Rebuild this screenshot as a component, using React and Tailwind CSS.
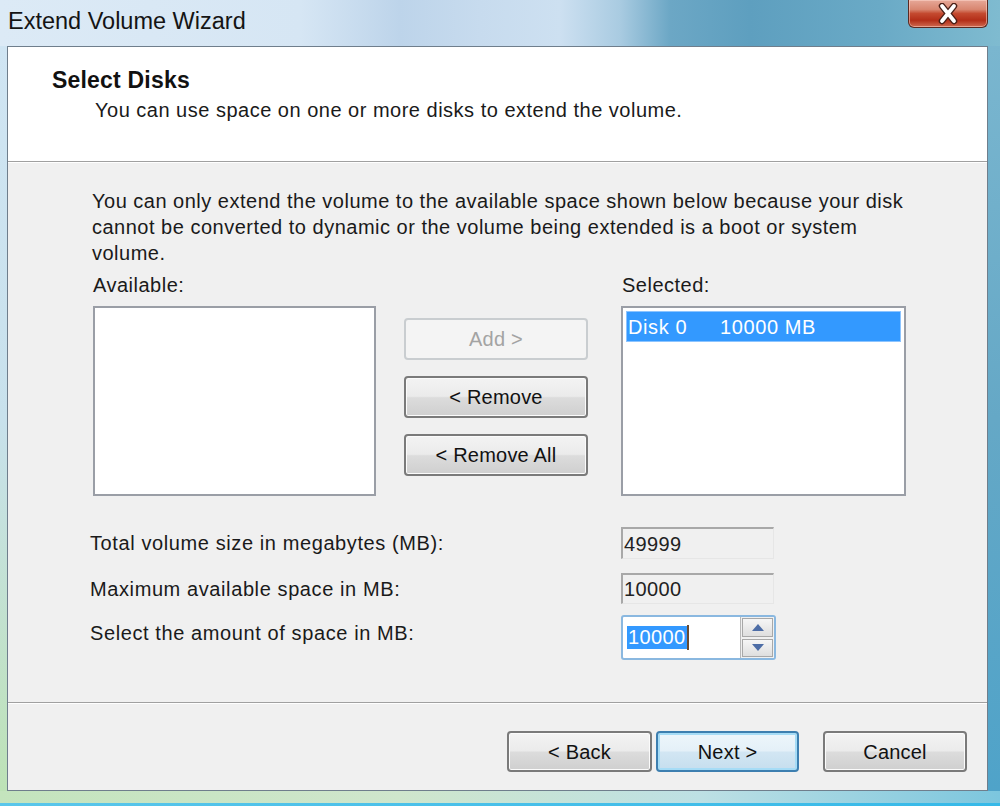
import React from "react";

function VButton({ children, className = "", disabled = false, focused = false }) {
  if (disabled) {
    return (
      <div className={"flex items-center justify-center rounded-[4px] border-2 border-[#c9cdd0] bg-[#f4f4f4] text-[#a3a3a3] text-[20px] leading-none tracking-[0.2px] " + className}>
        {children}
      </div>
    );
  }
  if (focused) {
    return (
      <div className={"flex items-center justify-center rounded-[4px] border-2 border-[#3d7fb0] bg-[linear-gradient(180deg,#eef6fb_0%,#e4f0f8_48%,#d2e6f3_52%,#c6deee_100%)] shadow-[inset_0_0_0_2px_#a6dcf6] text-[#111] text-[20px] leading-none tracking-[0.2px] " + className}>
        {children}
      </div>
    );
  }
  return (
    <div className={"flex items-center justify-center rounded-[4px] border-2 border-[#7a7a7a] bg-[linear-gradient(180deg,#f3f3f3_0%,#ebebeb_48%,#dcdcdc_52%,#cfcfcf_100%)] shadow-[inset_0_0_0_1px_#fbfbfb] text-[#111] text-[20px] leading-none tracking-[0.2px] " + className}>
      {children}
    </div>
  );
}

export default function App() {
  return (
    <div className="w-[1000px] h-[806px] flex flex-col overflow-hidden font-['Liberation_Sans',Arial,sans-serif] text-[#1a1a1a] bg-[#a9d0e3]">
      {/* Title bar */}
      <div className="h-[46px] flex items-start bg-[linear-gradient(90deg,#dceaf6_0%,#d6e6f4_30%,#bdd4ea_40%,#c7dbee_48%,#cde0f1_56%,#a9cbe1_62%,#6ca7c5_67%,#5e9fbf_75%,#6aaac6_88%,#7fbbd0_100%)]">
        <div className="pl-[8px] pt-[7px] text-[23.5px] leading-[28px] tracking-[0px] text-[#141414]">Extend Volume Wizard</div>
        <div className="ml-auto mr-[12px] w-[80px] h-[28px] rounded-b-[6px] border border-t-0 border-[#5a2a22] bg-[linear-gradient(180deg,#e6a898_0%,#d88670_35%,#c44a30_50%,#b32e18_75%,#cf6a50_100%)] shadow-[inset_0_0_0_1px_rgba(255,220,210,0.5)] flex items-center justify-center">
          <svg width="24" height="22" viewBox="0 0 24 22">
            <path d="M6 3 L18 18 M18 3 L6 18" stroke="#4a2018" strokeWidth="6.5" strokeLinecap="round" />
            <path d="M6 3 L18 18 M18 3 L6 18" stroke="#ffffff" strokeWidth="3.8" strokeLinecap="round" />
          </svg>
        </div>
      </div>

      {/* Middle */}
      <div className="flex flex-1 min-h-0">
        <div className="w-[7px] bg-[linear-gradient(180deg,#d0e5f3_0%,#c8e1ec_50%,#bde2b6_100%)]"></div>
        <div className="flex-1 border border-[#6f7e8c] flex flex-col min-w-0">
          {/* Header */}
          <div className="h-[114px] bg-white">
            <div className="pl-[44px] pt-[19px] text-[23px] leading-[28px] font-bold tracking-[0.2px] text-[#111]">Select Disks</div>
            <div className="pl-[87px] pt-[3px] text-[20px] leading-[26px] tracking-[0.5px]">You can use space on one or more disks to extend the volume.</div>
          </div>
          <div className="h-px bg-[#a0a0a0]"></div>
          <div className="h-px bg-white"></div>

          {/* Body */}
          <div className="flex-1 bg-[#f0f0f0] pl-[84px] pt-[25px] flex flex-col">
            <div className="text-[20px] leading-[26px] tracking-[0.5px] whitespace-nowrap">
              You can only extend the volume to the available space shown below because your disk
              <br />
              cannot be converted to dynamic or the volume being extended is a boot or system
              <br />
              volume.
            </div>

            <div className="flex mt-[6px]">
              <div className="flex flex-col ml-px">
                <div className="text-[20px] leading-[26px] tracking-[0.5px]">Available:</div>
                <div className="mt-[8px] w-[283px] h-[190px] bg-white border-2 border-[#9a9ea6]"></div>
              </div>
              <div className="flex flex-col ml-[28px] pt-[46px] gap-[16px]">
                <VButton disabled className="w-[184px] h-[42px]">Add &gt;</VButton>
                <VButton className="w-[184px] h-[42px]">&lt; Remove</VButton>
                <VButton className="w-[184px] h-[42px]">&lt; Remove All</VButton>
              </div>
              <div className="flex flex-col ml-[33px]">
                <div className="pl-px text-[20px] leading-[26px] tracking-[0.5px]">Selected:</div>
                <div className="mt-[8px] w-[285px] h-[190px] bg-white border-2 border-[#9a9ea6] p-[3px]">
                  <div className="h-[31px] bg-[#3399ff] border border-[#8cc4ff] flex items-center text-white text-[20px] leading-none tracking-[0.6px]">
                    <span className="pl-[1px] w-[93px]">Disk 0</span>
                    <span>10000 MB</span>
                  </div>
                </div>
              </div>
            </div>

            {/* Rows */}
            <div className="flex items-center mt-[31px] -ml-[2px] h-[32px]">
              <div className="w-[531px] text-[20px] leading-[26px] tracking-[0.6px]">Total volume size in megabytes (MB):</div>
              <div className="w-[153px] h-[32px] border-t-2 border-l-2 border-[#a8a8a8] border-b border-r border-b-[#e6e6e6] border-r-[#e6e6e6] bg-[#f0f0f0] flex items-center pl-[1px] text-[20px] leading-none tracking-[0.4px] text-[#222]">49999</div>
            </div>
            <div className="flex items-center mt-[14px] -ml-[2px] h-[31px]">
              <div className="w-[531px] text-[20px] leading-[26px] tracking-[0.6px]">Maximum available space in MB:</div>
              <div className="w-[153px] h-[31px] border-t-2 border-l-2 border-[#a8a8a8] border-b border-r border-b-[#e6e6e6] border-r-[#e6e6e6] bg-[#f0f0f0] flex items-center pl-[1px] text-[20px] leading-none tracking-[0.4px] text-[#222]">10000</div>
            </div>
            <div className="flex items-start mt-[11px] -ml-[2px] h-[45px]">
              <div className="w-[531px] pt-[5px] text-[20px] leading-[26px] tracking-[0.6px]">Select the amount of space in MB:</div>
              <div className="w-[155px] h-[45px] rounded-[3px] border-2 border-[#8ab8e0] bg-white flex">
                <div className="flex-1 flex items-center pl-[4px]">
                  <span className="bg-[#3399ff] text-white text-[20px] leading-[23px] px-[1px] tracking-[0.4px]">10000</span>
                  <span className="w-[2px] h-[25px] bg-[#6a4a30]"></span>
                </div>
                <div className="w-[34px] flex flex-col gap-[2px] p-[1px] border-l border-[#b8b8b8] bg-[#f0f0f0]">
                  <div className="flex-1 border border-[#a8a8a8] bg-[linear-gradient(180deg,#f6f6f6_0%,#dedede_100%)] flex items-center justify-center">
                    <svg width="12" height="7" viewBox="0 0 12 7"><path d="M0 7 L6 0 L12 7 Z" fill="#4d6da6" /></svg>
                  </div>
                  <div className="flex-1 border border-[#a8a8a8] bg-[linear-gradient(180deg,#f6f6f6_0%,#dedede_100%)] flex items-center justify-center">
                    <svg width="12" height="7" viewBox="0 0 12 7"><path d="M0 0 L12 0 L6 7 Z" fill="#4d6da6" /></svg>
                  </div>
                </div>
              </div>
            </div>
          </div>

          <div className="h-px bg-[#a0a0a0]"></div>
          <div className="h-px bg-white"></div>
          {/* Buttons */}
          <div className="h-[86px] bg-[#f0f0f0] flex justify-end items-start pt-[27px] pr-[20px]">
            <VButton className="w-[145px] h-[41px]">&lt; Back</VButton>
            <VButton focused className="ml-[4px] w-[143px] h-[41px]">Next &gt;</VButton>
            <VButton className="ml-[24px] w-[144px] h-[41px]">Cancel</VButton>
          </div>
        </div>
        <div className="w-[12px] bg-[linear-gradient(180deg,#7ab6cf_0%,#65a8c6_50%,#4fa3c9_100%)]"></div>
      </div>
      <div className="h-[15px] flex flex-col">
        <div className="flex-1 bg-[linear-gradient(90deg,#c4e4bd_0%,#cfe6cc_40%,#bde0e4_70%,#7cc6de_100%)]"></div>
        <div className="h-[3px] bg-[linear-gradient(90deg,#5ac6ea_0%,#36b9e8_100%)]"></div>
      </div>
    </div>
  );
}
